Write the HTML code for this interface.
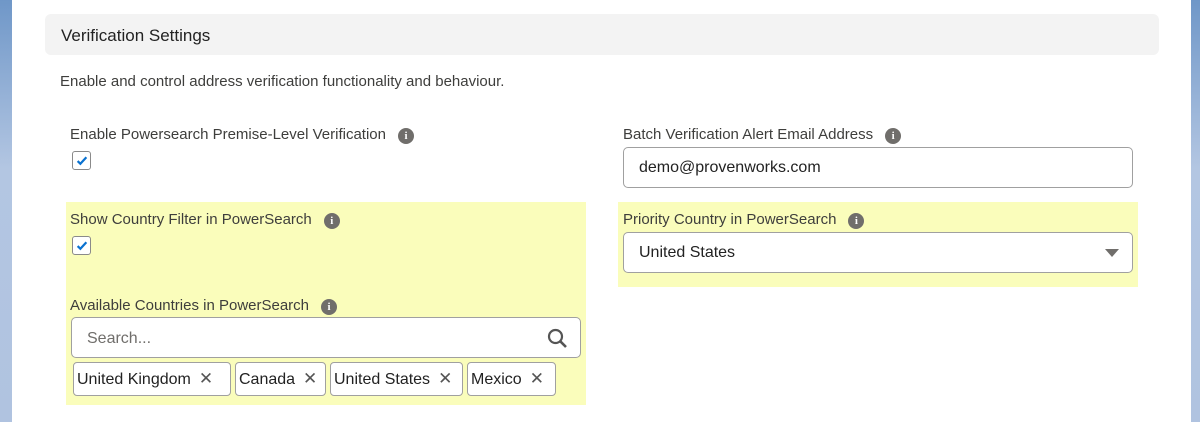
<!DOCTYPE html>
<html><head><style>
body{margin:0;width:1200px;height:422px;overflow:hidden;background:linear-gradient(180deg,#6f97c8,#b3c6e2 40%,#b0c3e0);font-family:"Liberation Sans",sans-serif;color:#3e3e3c;position:relative}
.card{position:absolute;left:12px;top:0;width:1179px;height:422px;background:#fff}
.a{position:absolute}
.hdr{left:45px;top:14px;width:1114px;height:41px;background:#f3f3f3;border-radius:6px}
.t{font-size:15px;white-space:nowrap}
.i{display:inline-block;width:16px;height:16px;border-radius:50%;background:#706e6b;color:#fff;font-size:11px;font-weight:bold;text-align:center;line-height:16px;font-family:"Liberation Serif",serif;vertical-align:0px;margin-left:12px}
.cb{width:19px;height:19px;border:1px solid #8a8a8a;border-radius:3px;background:#fff;box-sizing:border-box}
.cb svg{position:absolute;left:3px;top:3px}
.y{background:#fafdbb}
.in{border:1px solid #a0a0a0;border-radius:5px;background:#fff;box-sizing:border-box}
.chip{position:absolute;top:362px;height:34px;border:1px solid #a0a0a0;border-radius:4px;box-sizing:border-box;font-size:16px;line-height:32px;padding-left:3px;color:#222;background:#fff;white-space:nowrap}
.x{color:#555;margin-left:8px;font-size:17px}
</style></head><body>
<div class="card"></div>
<div class="a hdr"></div>
<div class="a" style="left:61px;top:26px;font-size:17px;color:#222">Verification Settings</div>
<div class="a t" style="left:60px;top:73px">Enable and control address verification functionality and behaviour.</div>
<div class="a t" style="left:70px;top:126px">Enable Powersearch Premise-Level Verification<span class="i">i</span></div>
<div class="a cb" style="left:72px;top:151px"><svg width="12" height="11" viewBox="0 0 11 10"><path d="M1.5 5.5 L4 8 L9.5 2" stroke="#0a72d0" stroke-width="2" fill="none"/></svg></div>
<div class="a y" style="left:66px;top:202px;width:520px;height:203px"></div>
<div class="a t" style="left:70px;top:211px">Show Country Filter in PowerSearch<span class="i">i</span></div>
<div class="a cb" style="left:72px;top:236px"><svg width="12" height="11" viewBox="0 0 11 10"><path d="M1.5 5.5 L4 8 L9.5 2" stroke="#0a72d0" stroke-width="2" fill="none"/></svg></div>
<div class="a t" style="left:70px;top:297px">Available Countries in PowerSearch<span class="i">i</span></div>
<div class="a in" style="left:71px;top:317px;width:510px;height:41px"></div>
<div class="a" style="left:87px;top:330px;font-size:16px;color:#706e6b">Search...</div>
<svg class="a" style="left:547px;top:328px" width="21" height="21" viewBox="0 0 21 21"><circle cx="8.5" cy="8.5" r="6.5" stroke="#555" stroke-width="2.2" fill="none"/><path d="M13.3 13.3 L19 19" stroke="#555" stroke-width="2.6"/></svg>
<div class="chip" style="left:73px;width:158px">United Kingdom<span class="x">✕</span></div>
<div class="chip" style="left:235px;width:91px">Canada<span class="x">✕</span></div>
<div class="chip" style="left:330px;width:133px">United States<span class="x">✕</span></div>
<div class="chip" style="left:467px;width:89px">Mexico<span class="x">✕</span></div>
<div class="a t" style="left:623px;top:126px">Batch Verification Alert Email Address<span class="i">i</span></div>
<div class="a in" style="left:623px;top:147px;width:510px;height:41px"></div>
<div class="a" style="left:639px;top:159px;font-size:16px;color:#222">demo@provenworks.com</div>
<div class="a y" style="left:618px;top:202px;width:520px;height:85px"></div>
<div class="a t" style="left:623px;top:211px">Priority Country in PowerSearch<span class="i">i</span></div>
<div class="a in" style="left:623px;top:232px;width:510px;height:41px"></div>
<div class="a" style="left:639px;top:244px;font-size:16px;color:#222">United States</div>
<svg class="a" style="left:1105px;top:249px" width="14" height="9"><path d="M0 0 H14 L7 8 Z" fill="#706e6b"/></svg>
</body></html>
